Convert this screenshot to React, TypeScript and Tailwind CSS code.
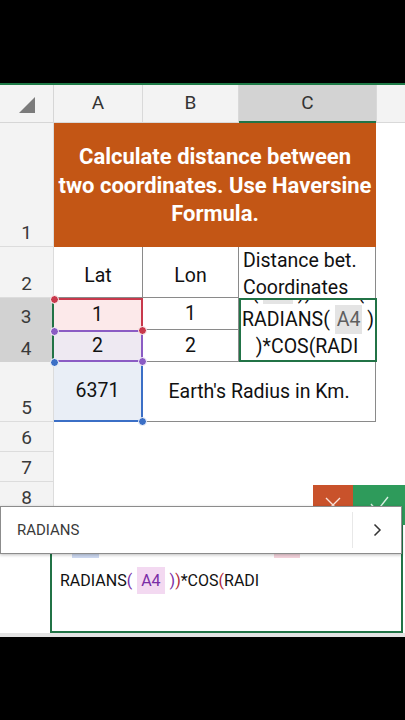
import React from "react";

const rowHeads = [
  { n: "1", pos: "row-start-2", sel: false },
  { n: "2", pos: "row-start-3", sel: false },
  { n: "3", pos: "row-start-4", sel: true },
  { n: "4", pos: "row-start-5", sel: true },
  { n: "5", pos: "row-start-6", sel: false },
  { n: "6", pos: "row-start-7", sel: false },
  { n: "7", pos: "row-start-8", sel: false },
  { n: "8", pos: "row-start-9", sel: false },
  { n: "", pos: "row-start-10", sel: false },
  { n: "", pos: "row-start-11", sel: false },
  { n: "", pos: "row-start-12", sel: false },
];

function Dot({ color, cls }: { color: string; cls: string }) {
  return (
    <span
      className={`absolute z-20 w-[9px] h-[9px] rounded-full border-[1.5px] border-white ${color} ${cls}`}
    />
  );
}

export default function App() {
  return (
    <div className="w-[405px] h-[720px] bg-black flex flex-col overflow-hidden font-['Roboto',sans-serif]">
      <div className="h-[83px] shrink-0 bg-black" />
      <div className="h-[2px] shrink-0 bg-[#1e7b47]" />
      <div className="relative h-[552px] shrink-0 bg-white overflow-hidden">
        <div className="grid grid-cols-[54px_89px_96px_137px_1fr] grid-rows-[38px_124px_51px_32px_32px_60px_30px_30px_30px_30px_30px_30px] text-[#111]">
          {/* header row */}
          <div className="col-start-1 row-start-1 bg-[#f3f3f3] border-r border-b border-[#d6d6d6] flex items-center justify-center">
            <svg width="17" height="16" viewBox="0 0 17 16" className="ml-[2px] mt-[2px]">
              <polygon points="16,0 16,16 0,16" fill="#7b7b7b" />
            </svg>
          </div>
          <div className="col-start-2 row-start-1 bg-[#f3f3f3] border-r border-b border-[#d9d9d9] flex items-center justify-center text-[19px] text-[#333]">
            A
          </div>
          <div className="col-start-3 row-start-1 bg-[#f3f3f3] border-r border-b border-[#d9d9d9] flex items-center justify-center text-[19px] text-[#333]">
            B
          </div>
          <div className="col-start-4 row-start-1 bg-[#d3d3d3] border-b-2 border-[#217346] flex items-center justify-center text-[19px] text-[#333]">
            C
          </div>
          <div className="col-start-5 row-start-1 bg-[#f3f3f3] border-l border-b border-[#d9d9d9]" />

          {/* row headers */}
          {rowHeads.map((r) =>
            r.sel ? (
              <div
                key={r.pos}
                className={`col-start-1 ${r.pos} bg-[#d2d2d2] border-r-2 border-r-[#217346] flex items-end justify-center pb-[2px] text-[19px] leading-[22px] text-[#3a3a3a]`}
              >
                {r.n}
              </div>
            ) : (
              <div
                key={r.pos}
                className={`col-start-1 ${r.pos} bg-[#f3f3f3] border-r border-b border-[#dcdcdc] flex items-end justify-center pb-[2px] text-[19px] leading-[22px] text-[#3a3a3a]`}
              >
                {r.n}
              </div>
            )
          )}

          {/* row 1 title */}
          <div className="col-start-2 col-span-3 row-start-2 bg-[#c35615] flex items-center justify-center text-center text-white font-bold text-[22px] leading-[28.5px] whitespace-nowrap pt-[2px]">
            <div>
              Calculate distance between
              <br />
              two coordinates. Use Haversine
              <br />
              Formula.
            </div>
          </div>

          {/* row 2 */}
          <div className="col-start-2 row-start-3 border-r border-b border-[#8a8a8a] flex items-end justify-center pb-[8px] text-[19.5px] leading-[27px]">
            Lat
          </div>
          <div className="col-start-3 row-start-3 border-r border-b border-[#8a8a8a] flex items-end justify-center pb-[8px] text-[19.5px] leading-[27px]">
            Lon
          </div>
          <div className="col-start-4 row-start-3 border-r border-[#8a8a8a] pl-[4px] text-[19.5px] leading-[27px] whitespace-nowrap overflow-hidden">
            Distance bet.
            <br />
            Coordinates
          </div>

          {/* row 3 */}
          <div className="relative col-start-2 row-start-4 bg-[#fce9ea] border-t-2 border-r-2 border-[#c8394c] flex items-center justify-center text-[19.5px]">
            1
            <Dot color="bg-[#c8394c]" cls="-left-[4.5px] -top-[5px]" />
            <Dot color="bg-[#c8394c]" cls="-right-[5.5px] -bottom-[4.5px]" />
          </div>
          <div className="col-start-3 row-start-4 border-r border-b border-[#8a8a8a] flex items-center justify-center text-[19.5px]">
            1
          </div>
          <div className="relative z-10 col-start-4 row-start-4 row-span-2 -mr-[1px] bg-white border-2 border-[#217346] overflow-hidden flex flex-col justify-end items-center text-[19.5px] leading-[27px] whitespace-nowrap">
            <div>
              ( <span className="bg-[#e4e4e4] text-[#666] px-[3px]">A3</span> ))*COS(
            </div>
            <div>
              RADIANS( <span className="bg-[#e4e4e4] text-[#5f5f5f] px-[2px] py-[3px]">A4</span> )
            </div>
            <div className="pr-[2px]">)*COS(RADI</div>
          </div>

          {/* row 4 */}
          <div className="relative col-start-2 row-start-5 bg-[#eee9f2] border-t-2 border-r-2 border-b-2 border-[#8b5cc4] flex items-center justify-center text-[19.5px]">
            2
            <Dot color="bg-[#8b5cc4]" cls="-left-[4.5px] -top-[5px]" />
            <Dot color="bg-[#8b5cc4]" cls="-right-[5.5px] -bottom-[5.5px]" />
          </div>
          <div className="col-start-3 row-start-5 border-r border-b border-[#8a8a8a] flex items-center justify-center text-[19.5px]">
            2
          </div>

          {/* row 5 */}
          <div className="relative col-start-2 row-start-6 bg-[#e9eef6] border-r-2 border-b-2 border-[#3b6fc6] flex items-center justify-center text-[19.5px]">
            6371
            <Dot color="bg-[#3b6fc6]" cls="-left-[4.5px] -top-[4.5px]" />
            <Dot color="bg-[#3b6fc6]" cls="-right-[5.5px] -bottom-[5.5px]" />
          </div>
          <div className="col-start-3 col-span-2 row-start-6 border-r border-b border-[#8a8a8a] flex items-center justify-center text-[19.5px] whitespace-nowrap">
            Earth&apos;s Radius in Km.
          </div>
        </div>

        {/* formula editor panel */}
        <div className="absolute left-0 right-0 top-[400px] bottom-0 flex flex-col">
          <div className="h-[40px] shrink-0 flex justify-end">
            <div className="w-[40px] bg-[#c9522b] flex justify-center pt-[11px]">
              <svg width="18" height="18" viewBox="0 0 18 18">
                <path d="M2 2 L16 16 M16 2 L2 16" stroke="#fbe3da" strokeWidth="1.4" fill="none" />
              </svg>
            </div>
            <div className="w-[52px] bg-[#2e9b5b] flex justify-center pt-[10px]">
              <svg width="22" height="20" viewBox="0 0 22 20">
                <path d="M3 9 L9 16 L20 2" stroke="#d9f0e2" strokeWidth="1.4" fill="none" />
              </svg>
            </div>
          </div>
          <div className="flex-1 bg-white flex">
            <div className="w-[50px] shrink-0" />
            <div className="flex-1 mr-[2px] border-2 border-[#217346] pt-[4px] pl-[8px]">
              <div className="h-[27px] flex">
                <span className="ml-[12px] w-[27px] h-[27px] bg-[#cdd9f1]" />
                <span className="ml-[175px] w-[26px] h-[27px] bg-[#f4d3dc]" />
              </div>
              <div className="mt-[9px] h-[27px] flex items-center text-[16px] text-[#111] whitespace-nowrap">
                <span>RADIANS</span>
                <span className="text-[#7a2da6]">(</span>
                <span className="ml-[5px] h-[27px] px-[4px] flex items-center bg-[#f3d9f1] text-[#7a2da6]">A4</span>
                <span className="ml-[5px] text-[#7a2da6]">)</span>
                <span className="text-[#b0273a]">)</span>
                <span>*COS</span>
                <span className="text-[#b0273a]">(</span>
                <span>RADI</span>
              </div>
            </div>
          </div>
          <div className="h-[4px] shrink-0 bg-[#e3e3e3]" />
        </div>

        {/* autocomplete popup */}
        <div className="absolute left-0 top-[421px] w-[402px] h-[48px] bg-white border border-[#8c8c8c] shadow-[0_1px_3px_rgba(0,0,0,0.25)] flex items-center">
          <div className="flex-1 pl-[16px] text-[15px] text-[#3a3a3a]">RADIANS</div>
          <div className="w-px h-[36px] bg-[#e8e8e8]" />
          <div className="w-[48px] flex items-center justify-center">
            <svg width="10" height="14" viewBox="0 0 10 14">
              <path d="M2.5 1.5 L8 7 L2.5 12.5" stroke="#333" strokeWidth="1.5" fill="none" />
            </svg>
          </div>
        </div>
      </div>
      <div className="flex-1 bg-black" />
    </div>
  );
}
